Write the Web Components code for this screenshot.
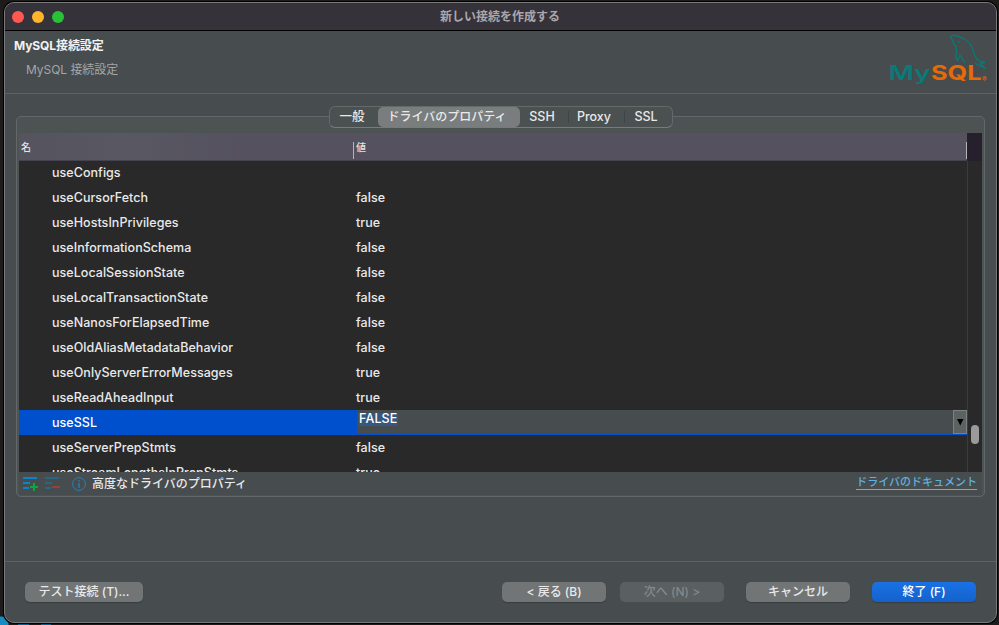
<!DOCTYPE html>
<html lang="ja">
<head>
<meta charset="utf-8">
<title>新しい接続を作成する</title>
<style>
    html, body {
        margin: 0;
        height: 100%;
        overflow: hidden;
        background: #1d1c1b;
    }

    body {
        box-sizing: border-box;
        padding: 2px 2px 2px 4px;
        font: 500 13px/20px Inter, "Noto Sans CJK JP", sans-serif;
        color: #e9e9e9;
        background: radial-gradient(circle at 1px 624px, #168bc4 0 7px, transparent 8px),
            linear-gradient(90deg, #1d1c1b 18px, #0b5b86 18px 29px, #1d1c1b 29px 41px, #0b5b86 41px 51px, #1d1c1b 51px) 0 624px / 100% 1px no-repeat,
            #1d1c1b;
    }
</style>
</head>
<body>
<dialog-window caption="新しい接続を作成する">
    <wizard-header slot="header" caption="MySQL接続設定" description="MySQL 接続設定"></wizard-header>
    <tab-folder>
        <tab-item slot="tab" style="width:48px">一般</tab-item>
        <tab-item slot="tab" style="width:142px" selected>ドライバのプロパティ</tab-item>
        <tab-item slot="tab" style="width:48px">SSH</tab-item>
        <tab-item slot="tab" style="width:56px" divided>Proxy</tab-item>
        <tab-item slot="tab" style="width:48px" divided>SSL</tab-item>
        <property-table></property-table>
        <table-tools></table-tools>
    </tab-folder>
    <push-button slot="left" style="width:118px">テスト接続 (T)...</push-button>
    <push-button slot="right">&lt; 戻る (B)</push-button>
    <push-button slot="right" disabled>次へ (N) &gt;</push-button>
    <push-button slot="right" style="margin-left:8px">キャンセル</push-button>
    <push-button slot="right" style="margin-left:8px" primary>終了 (F)</push-button>
</dialog-window>

<script>
class BaseHTMLElement extends HTMLElement {
    constructor() {
        super();
        this.attachShadow({ mode: 'open' });
    }

    render() {
        return '';
    }

    connectedCallback() {
        this.shadowRoot.innerHTML = `<style>${this.constructor.styles}</style>${this.render()}`;
    }
}

class DialogWindow extends BaseHTMLElement {
    static get styles() {
        return `
        :host {
            display: flex;
            flex-direction: column;
            box-sizing: border-box;
            height: 621px;
            border: 1px solid #77797a;
            border-radius: 10px;
            overflow: hidden;
            background: #474c4e;
            box-shadow: 0 0 0 1px #000;
        }

        .titlebar {
            display: grid;
            grid-template-columns: 80px 1fr 80px;
            align-items: center;
            height: 27px;
            background: #36323a;
            border-bottom: 1px solid #000;
        }

        .lights {
            display: flex;
            gap: 8px;
            padding-left: 7px;
        }

        .lights i {
            width: 12px;
            height: 12px;
            border-radius: 50%;
            background: #ff5850;
        }

        .lights i:nth-child(2) { background: #ffb429; }
        .lights i:nth-child(3) { background: #28c138; }

        .caption {
            text-align: center;
            font-size: 12px;
            font-weight: 700;
            color: #aaa7ac;
            padding-right: 1px;
        }

        main {
            flex: 1;
            padding: 12px 11px 0;
        }

        footer {
            display: flex;
            justify-content: space-between;
            height: 40px;
            padding: 20px 20px 0;
            border-top: 1px solid #5e6264;
        }

        .right {
            display: flex;
            gap: 14px;
        }
        `;
    }

    render() {
        return `
        <div class="titlebar">
            <div class="lights"><i></i><i></i><i></i></div>
            <div class="caption">${this.getAttribute('caption')}</div>
        </div>
        <slot name="header"></slot>
        <main><slot></slot></main>
        <footer>
            <slot name="left"></slot>
            <div class="right"><slot name="right"></slot></div>
        </footer>`;
    }
}

class WizardHeader extends BaseHTMLElement {
    static get styles() {
        return `
        :host {
            display: flex;
            justify-content: space-between;
            height: 62px;
            border-bottom: 1px solid #5e6264;
            font-size: 12px;
        }

        h1 {
            margin: 5px 0 4px 9px;
            font: inherit;
            font-weight: 700;
            letter-spacing: -0.1px;
            color: #f2f2f2;
        }

        p {
            margin: 0 0 0 21px;
            font-weight: 400;
            letter-spacing: -0.050px;
            color: #a3a6a7;
        }

        svg {
            margin-right: 3px;
        }
        `;
    }

    render() {
        return `
        <div>
            <h1>${this.getAttribute('caption')}</h1>
            <p>${this.getAttribute('description')}</p>
        </div>
        <svg width="106" height="62" viewBox="0 0 106 62">
            <path d="M78 32l-3-5-2-3-2.500 5.500c-2-2-2-4-1.500-6 1.500-4 0-8-2-10.500-1.500-2.500-1-4-3-6.500-1-2 2-2.500 4-2 3 0 5 2 8 3 5 2 8 6 9.500 10 1.500 4 2 8 4.500 11 2 1.500 5 2 8 2.800-2 1-3.500.5-5 1l5.500 5.500c-2-2-3.500-3-6-3.300-2-.2-3-1-4.500-2.500" fill="none" stroke="#087a78" stroke-width="1.300" stroke-linejoin="round"/>
            <circle cx="71.700" cy="11" r="0.900" fill="#087a78"/>
            <g font-family="Inter, sans-serif" font-size="20">
                <text x="1.500" y="49.300" textLength="42" lengthAdjust="spacingAndGlyphs" fill="#087a78" font-weight="600">My</text>
                <text x="44" y="49.300" textLength="50.500" lengthAdjust="spacingAndGlyphs" fill="#e86a05" font-weight="700">SQL</text>
                <text x="95" y="51" font-size="7" fill="#e86a05">®</text>
            </g>
        </svg>`;
    }
}

class TabFolder extends BaseHTMLElement {
    static get styles() {
        return `
        :host {
            display: block;
            width: 969px;
        }

        .tabs {
            display: flex;
            position: relative;
            box-sizing: border-box;
            width: 344px;
            height: 22px;
            margin: 0 auto -12px 313px;
            border: 1px solid #646969;
            border-bottom-color: #777b7b;
            border-radius: 6px;
            background: #4b5051;
            z-index: 1;
        }

        .group {
            box-sizing: border-box;
            height: 381px;
            padding: 16px 2px 0;
            border: 1px solid #626869;
            border-radius: 5px;
            background: #4d5253;
        }
        `;
    }

    render() {
        return `
        <div class="tabs"><slot name="tab"></slot></div>
        <div class="group"><slot></slot></div>`;
    }
}

class TabItem extends BaseHTMLElement {
    static get styles() {
        return `
        :host {
            position: relative;
            box-sizing: border-box;
            height: 20px;
            padding-right: 4px;
            line-height: 19px;
            text-align: center;
            font-size: 12.500px;
            white-space: nowrap;
        }

        :host([selected]) {
            background: #797d7d;
            border-radius: 5px;
            font-size: 12px;
        }

        :host([divided])::before {
            content: '';
            position: absolute;
            left: 0;
            top: 4px;
            height: 12px;
            border-left: 1px solid #3f4445;
        }
        `;
    }

    render() {
        return `<slot></slot>`;
    }
}

class PropertyRow extends BaseHTMLElement {
    static get styles() {
        return `
        :host {
            display: grid;
            grid-template-columns: 338px 1fr;
            height: 25px;
            line-height: 25px;
            font-size: 12.500px;
            letter-spacing: 0.040px;
        }

        .name {
            padding-left: 33px;
        }

        .value {
            margin-left: -1px;
        }

        :host([selected]) {
            background: #004fcc;
            color: #fff;
        }

        .editor {
            display: flex;
            justify-content: space-between;
            height: 24px;
            background: #474c4e;
        }

        .editor span {
            height: 13px;
            margin: 3px 0 0 2px;
            line-height: 12px;
            letter-spacing: 0.150px;
            background: #385780;
        }

        .drop {
            box-sizing: border-box;
            width: 14px;
            height: 24px;
            border: 1px solid #7c8081;
            background: #5c6162;
        }

        .drop svg {
            display: block;
        }
        `;
    }

    render() {
        let value = this.getAttribute('value');
        if (!this.hasAttribute('selected')) {
            return `<div class="name">${this.getAttribute('name')}</div><div class="value">${value}</div>`;
        }
        return `
        <div class="name">${this.getAttribute('name')}</div>
        <div class="editor">
            <span>${value}</span>
            <div class="drop"><svg width="12" height="22"><path d="M3 8h6.500l-3.250 6.500z" fill="#000"/></svg></div>
        </div>`;
    }
}

const properties = [
    ['useConfigs', ''],
    ['useCursorFetch', 'false'],
    ['useHostsInPrivileges', 'true'],
    ['useInformationSchema', 'false'],
    ['useLocalSessionState', 'false'],
    ['useLocalTransactionState', 'false'],
    ['useNanosForElapsedTime', 'false'],
    ['useOldAliasMetadataBehavior', 'false'],
    ['useOnlyServerErrorMessages', 'true'],
    ['useReadAheadInput', 'true'],
    ['useSSL', 'FALSE'],
    ['useServerPrepStmts', 'false'],
    ['useStreamLengthsInPrepStmts', 'true']
];

class PropertyTable extends BaseHTMLElement {
    static get styles() {
        return `
        :host {
            display: grid;
            grid-template-columns: 948px 15px;
            grid-template-rows: 28px 311px;
            height: 339px;
            overflow: hidden;
            background: #292929;
        }

        .head {
            display: grid;
            grid-template-columns: 334px 1fr;
            align-items: end;
            padding-bottom: 1px;
            background: linear-gradient(90deg, #55535e, #595862 100px, #55515f 230px);
            border-bottom: 1px solid #464350;
            font-size: 10px;
            line-height: 18px;
            color: #e5e3e8;
        }

        .head div:first-child {
            padding-left: 2px;
            height: 21px;
        }

        .head div:last-child {
            height: 17px;
            line-height: 11px;
            padding-left: 2px;
            border: solid #b5b3ba;
            border-width: 0 1px;
        }

        .corner {
            background: #25202b;
        }

        .rows {
            overflow: hidden;
        }

        /* first row slides under the header line */
        .rows property-row:first-child {
            margin-top: -1px;
        }

        .scroll {
            border-left: 1px solid #3c3c3c;
        }

        .thumb {
            width: 8px;
            height: 19px;
            margin: 264px 0 0 3px;
            border-radius: 4px;
            background: #9a9a9a;
        }
        `;
    }

    render() {
        let rows = properties.map(([name, value]) =>
            `<property-row name="${name}" value="${value}"${name == 'useSSL' ? ' selected' : ''}></property-row>`);
        return `
        <div class="head"><div>名</div><div>値</div></div>
        <div class="corner"></div>
        <div class="rows">${rows.join('')}</div>
        <div class="scroll"><div class="thumb"></div></div>`;
    }
}

class TableTools extends BaseHTMLElement {
    static get styles() {
        return `
        :host {
            display: flex;
            align-items: center;
            height: 23px;
            padding: 0 5px 0 3px;
            font-size: 12px;
            background: #474c4e;
        }

        .info {
            margin: 0 6px 0 12px;
        }

        a {
            margin-left: auto;
            font-size: 11px;
            line-height: 14px;
            color: #5eb2df;
            border-bottom: 1px solid #5eb2df;
            margin-top: -2px;
        }
        `;
    }

    render() {
        return `
        <svg width="38" height="16" viewBox="0 0 38 16" fill="none" stroke-width="2">
            <path d="M1 2h14M1 7h7M1 12h6" stroke="#0787c9"/>
            <path d="M8 11h8M12 7v8" stroke="#0ca83b"/>
            <path d="M23 2h14M23 7h7M23 12h6" stroke="#286783"/>
            <path d="M30 11h8" stroke="#9b3f3c"/>
        </svg>
        <svg class="info" width="14" height="14" viewBox="0 0 14 14">
            <circle cx="7" cy="7" r="6.400" fill="none" stroke="#2481bd"/>
            <path d="M7 6v5M7 3v1.500" stroke="#2481bd" stroke-width="1.300"/>
        </svg>
        <span>高度なドライバのプロパティ</span>
        <a>ドライバのドキュメント</a>`;
    }
}

class PushButton extends BaseHTMLElement {
    static get styles() {
        return `
        :host {
            display: block;
            width: 104px;
            height: 20px;
            line-height: 19px;
            border-radius: 5px;
            text-align: center;
            font-size: 12px;
            white-space: nowrap;
            background: #717576;
            box-shadow: 0 1px 1px #393e40;
        }

        :host([disabled]) {
            color: #858889;
            background: #5a5f61;
            box-shadow: none;
        }

        :host([primary]) {
            color: #fff;
            background: linear-gradient(#1a72e5, #1461cc);
        }
        `;
    }

    render() {
        return `<slot></slot>`;
    }
}

customElements.define('property-row', PropertyRow);
customElements.define('property-table', PropertyTable);
customElements.define('table-tools', TableTools);
customElements.define('tab-item', TabItem);
customElements.define('tab-folder', TabFolder);
customElements.define('push-button', PushButton);
customElements.define('wizard-header', WizardHeader);
customElements.define('dialog-window', DialogWindow);
</script>
</body>
</html>
